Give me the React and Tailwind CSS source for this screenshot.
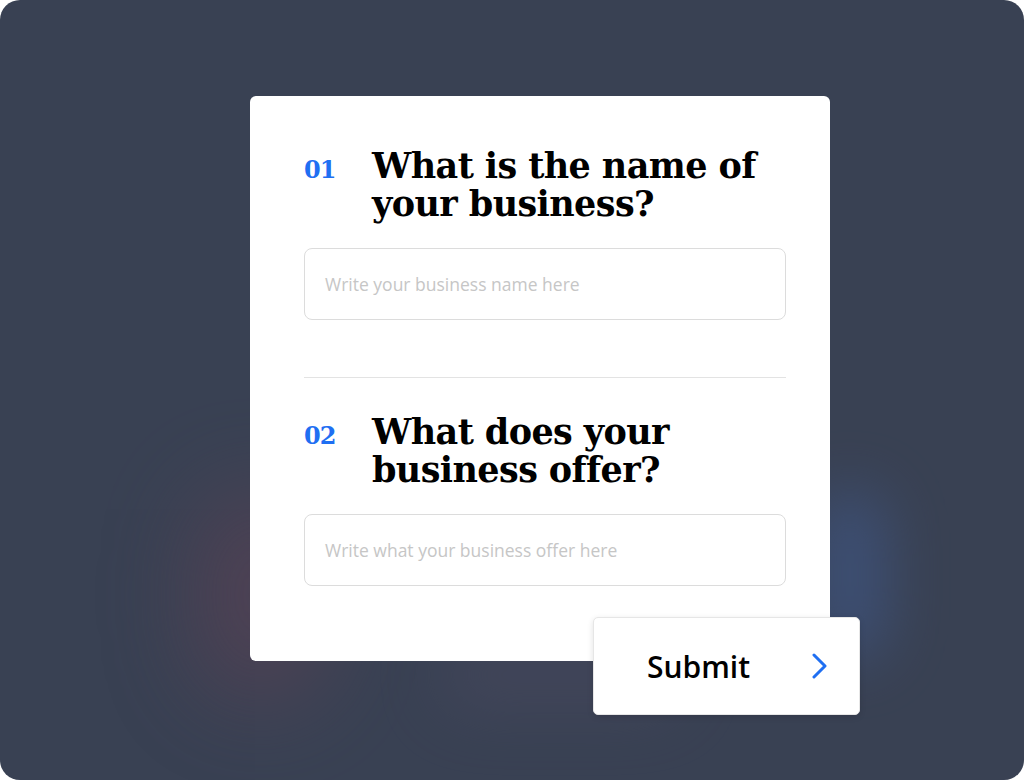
import React from "react";

const serif = "font-['DejaVu_Serif',serif]";
const sans = "font-['Open_Sans',sans-serif]";

const Question = ({ num, title, placeholder }) => (
  <div className="flex flex-col gap-[26px]">
    <div className="flex items-start">
      <span className={`${serif} w-[68px] pt-[11px] text-[24px] font-bold leading-none tracking-[-1px] text-[#1f6ff2]`}>{num}</span>
      <h2 className={`${serif} text-[35px] font-bold leading-[37.5px] tracking-[-0.6px] text-black`}>{title}</h2>
    </div>
    <div className="h-[72px] rounded-lg border border-[#dcdcdc] px-5 flex items-center">
      <span className={`${sans} text-[17.5px] text-[#c6c6c6]`}>{placeholder}</span>
    </div>
  </div>
);

export default function App() {
  return (
    <div className="w-[1024px] h-[780px] bg-white">
      <div className="relative w-full h-full rounded-[20px] bg-[#394153] overflow-hidden pt-[96px] pl-[250px]">
        {/* soft glows behind the card */}
        <div className="absolute left-[195px] top-[490px] w-[130px] h-[210px] rounded-full bg-[#5e4255] opacity-60 blur-[45px]" />
        <div className="absolute left-[815px] top-[490px] w-[70px] h-[170px] rounded-full bg-[#40598a] opacity-65 blur-[30px]" />
        <div className="absolute left-[440px] top-[640px] w-[240px] h-[70px] rounded-full bg-[#4a4a60] opacity-50 blur-[30px]" />

        <div className="relative w-[580px] h-[565px] rounded-md bg-white pl-[54px] pr-[44px] pt-[51px] flex flex-col">
          <Question num="01" title={<>What is the name of<br />your business?</>} placeholder="Write your business name here" />
          <div className="mt-[57px] mb-[35px] h-px bg-[#e3e3e3]" />
          <Question num="02" title={<>What does your<br />business offer?</>} placeholder="Write what your business offer here" />

          <button className="absolute right-[-30px] bottom-[-54px] w-[267px] h-[98px] rounded-[5px] bg-white border border-[#e6e6e6] shadow-[0_2px_6px_rgba(0,0,0,0.12)] flex items-center pl-[53px] pr-[30px]">
            <span className={`${sans} text-[30px] font-semibold text-black`}>Submit</span>
            <svg className="ml-auto" width="18" height="26" viewBox="0 0 18 26" fill="none">
              <path d="M3 2l11 11-11 11" stroke="#1f6ff2" strokeWidth="3" strokeLinecap="round" strokeLinejoin="round" />
            </svg>
          </button>
        </div>
      </div>
    </div>
  );
}
